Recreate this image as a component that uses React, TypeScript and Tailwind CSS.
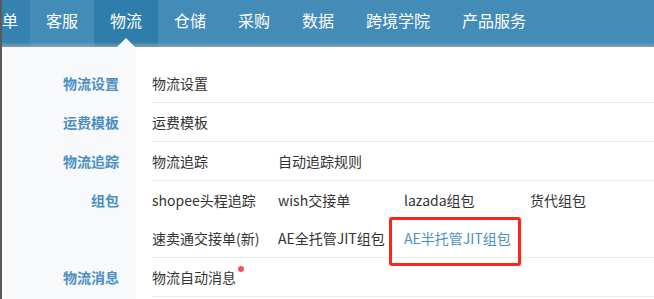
import React from "react";

const tabs = [
  { label: "客服", w: "w-[64px]" },
  { label: "物流", w: "w-[64px]", active: true },
  { label: "仓储", w: "w-[64px]" },
  { label: "采购", w: "w-[64px]" },
  { label: "数据", w: "w-[64px]" },
  { label: "跨境学院", w: "w-[96px]" },
  { label: "产品服务", w: "w-[96px]" },
];

type Item = { text: string; highlight?: boolean; boxed?: boolean; dot?: boolean };
type Row = { label: string; lines: Item[][] };

const rows: Row[] = [
  { label: "物流设置", lines: [[{ text: "物流设置" }]] },
  { label: "运费模板", lines: [[{ text: "运费模板" }]] },
  { label: "物流追踪", lines: [[{ text: "物流追踪" }, { text: "自动追踪规则" }]] },
  {
    label: "组包",
    lines: [
      [{ text: "shopee头程追踪" }, { text: "wish交接单" }, { text: "lazada组包" }, { text: "货代组包" }],
      [{ text: "速卖通交接单(新)" }, { text: "AE全托管JIT组包" }, { text: "AE半托管JIT组包", highlight: true, boxed: true }],
    ],
  },
  { label: "物流消息", lines: [[{ text: "物流自动消息", dot: true }]] },
];

export default function App() {
  return (
    <div className="w-[654px] h-[299px] overflow-hidden flex bg-white font-['Noto_Sans_CJK_SC','Noto_Sans',sans-serif]">
      <div className="w-[2px] shrink-0 bg-[#5a5a5a]" />
      <div className="flex-1 flex flex-col min-w-0">
        <nav className="relative h-[47px] shrink-0 flex bg-[#438cb8] text-white text-[16px]">
          <div className="w-[28px] h-full overflow-hidden flex justify-end items-center pb-[8px] pr-[12px] bg-[#3683b1] whitespace-nowrap">
            单
          </div>
          {tabs.map((t) => (
            <div
              key={t.label}
              className={`relative ${t.w} h-full flex justify-center items-center pb-[8px] whitespace-nowrap ${
                t.active ? "bg-[#2f7dab]" : ""
              }`}
            >
              {t.label}
              {t.active && (
                <span className="absolute z-20 bottom-0 left-1/2 -translate-x-1/2 w-0 h-0 border-l-[9px] border-r-[9px] border-b-[9px] border-l-transparent border-r-transparent border-b-[#f7f9fb]" />
              )}
            </div>
          ))}
          <div className="pointer-events-none absolute z-10 left-0 right-0 bottom-0 h-[5px] bg-gradient-to-b from-[rgba(160,168,175,0)] to-[rgba(160,168,175,0.75)]" />
        </nav>
        <div className="flex-1 pt-[17px] bg-[linear-gradient(to_right,#f7f9fb_134px,#ffffff_134px)]">
          {rows.map((r) => (
            <div key={r.label} className="flex">
              <div className="w-[134px] shrink-0 pr-[17px] text-right text-[14px] font-bold text-[#4a8fc0] leading-[38px] h-[38px]">
                {r.label}
              </div>
              <div className="flex-1 ml-4 border-b border-[#eeeeee]">
                {r.lines.map((line, i) => (
                  <div key={i} className="grid grid-cols-[126px_126px_126px_126px] h-[38px] text-[14px] text-[#333333]">
                    {line.map((it) => (
                      <div
                        key={it.text}
                        className={`relative flex items-center whitespace-nowrap ${it.highlight ? "text-[#4a90c2]" : ""}`}
                      >
                        {it.dot ? (
                          <span className="relative inline-block leading-[20px]">
                            {it.text}
                            <span className="absolute -right-[8px] -top-[1px] w-[6px] h-[6px] rounded-full bg-[#f4505c]" />
                          </span>
                        ) : (
                          it.text
                        )}
                        {it.boxed && (
                          <span className="absolute z-10 left-[-15px] top-[-2px] w-[132px] h-[49px] border-[3px] border-[#ff2418] rounded-[3px]" />
                        )}
                      </div>
                    ))}
                  </div>
                ))}
              </div>
            </div>
          ))}
        </div>
      </div>
    </div>
  );
}
